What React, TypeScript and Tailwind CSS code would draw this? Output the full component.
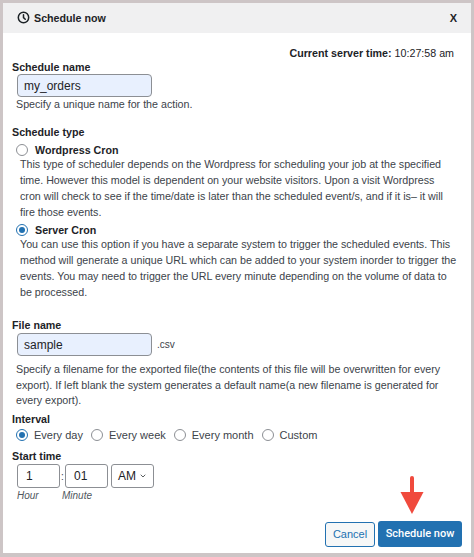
import { ChevronDown } from 'lucide-react'

function Radio({ checked }: { checked?: boolean }) {
  return (
    <span
      className={
        'inline-flex h-[12px] w-[12px] shrink-0 items-center justify-center rounded-full border bg-white ' +
        (checked ? 'border-[#2271b1]' : 'border-[#8c8f94]')
      }
    >
      {checked && <span className="h-[6px] w-[6px] rounded-full bg-[#2271b1]" />}
    </span>
  )
}

function ClockIcon() {
  return (
    <svg width="13" height="13" viewBox="0 0 24 24" fill="none" stroke="#1d2327" strokeWidth="2.8" strokeLinecap="round">
      <circle cx="12" cy="12" r="9.6" />
      <path d="M12 6.8v5.4l3.2 3" />
    </svg>
  )
}

const intervals = ['Every day', 'Every week', 'Every month', 'Custom']

export default function App() {
  return (
    <div
      className="h-[557px] w-[474px] bg-[#cdc5c6] px-[3px] pb-[4px] pt-[3px] text-[10.7px] text-[#3c434a]"
      style={{ fontFamily: '"Liberation Sans", Arial, sans-serif' }}
    >
      <div className="flex h-full flex-col bg-white">
        {/* header */}
        <div className="flex h-[30px] shrink-0 items-center justify-between bg-[#f0f0f1] pl-[14px] pr-[14px]">
          <div className="flex items-center gap-[4px]">
            <ClockIcon />
            <span className="text-[10.7px] font-bold text-[#1d2327]">Schedule now</span>
          </div>
          <span className="text-[11px] font-bold text-[#1d2327]">X</span>
        </div>

        <div className="flex flex-1 flex-col px-[9px]">
          <div className="mr-[8px] mt-[13px] text-right leading-[14px] text-[#1d2327]">
            <span className="font-bold">Current server time:</span> 10:27:58 am
          </div>

          <div className="font-bold leading-[14px] text-[#1d2327]">Schedule name</div>
          <div className="ml-[5px] flex h-[23px] w-[135px] items-center rounded-[4px] border border-[#8c8f94] bg-[#e8f0fe] px-[6px] text-[12px] text-[#1d2327]">
            my_orders
          </div>
          <div className="ml-[4px] leading-[14px]">Specify a unique name for the action.</div>

          <div className="mt-[14px] font-bold leading-[14px] text-[#1d2327]">Schedule type</div>
          <div className="ml-[4px] mt-[4px] flex h-[14px] items-center gap-[7px]">
            <Radio />
            <span className="font-bold text-[#1d2327]">Wordpress Cron</span>
          </div>
          <p className="ml-[8px] mt-[-1px] leading-[16px]">
            This type of scheduler depends on the Wordpress for scheduling your job at the specified
            <br />
            time. However this model is dependent on your website visitors. Upon a visit Wordpress
            <br />
            cron will check to see if the time/date is later than the scheduled event/s, and if it is– it will
            <br />
            fire those events.
          </p>
          <div className="ml-[4px] mt-[3px] flex h-[14px] items-center gap-[7px]">
            <Radio checked />
            <span className="font-bold text-[#1d2327]">Server Cron</span>
          </div>
          <p className="ml-[8px] mt-[-1px] leading-[16px]">
            You can use this option if you have a separate system to trigger the scheduled events. This
            <br />
            method will generate a unique URL which can be added to your system inorder to trigger the
            <br />
            events. You may need to trigger the URL every minute depending on the volume of data to
            <br />
            be processed.
          </p>

          <div className="mt-[18px] font-bold leading-[14px] text-[#1d2327]">File name</div>
          <div className="ml-[5px] mt-[1px] flex items-center gap-[5px]">
            <div className="flex h-[23px] w-[135px] items-center rounded-[4px] border border-[#8c8f94] bg-[#e8f0fe] px-[6px] text-[12px] text-[#1d2327]">
              sample
            </div>
            <span className="text-[10px]">.csv</span>
          </div>
          <p className="ml-[4px] mt-[6px] leading-[15.7px]">
            Specify a filename for the exported file(the contents of this file will be overwritten for every
            <br />
            export). If left blank the system generates a default name(a new filename is generated for
            <br />
            every export).
          </p>

          <div className="mt-[3px] font-bold leading-[14px] text-[#1d2327]">Interval</div>
          <div className="ml-[4px] mt-[1px] flex h-[16px] items-center">
            {intervals.map((label, i) => (
              <label key={label} className="mr-[8px] flex items-center gap-[6px]">
                <Radio checked={i === 0} />
                <span className="text-[11px]">{label}</span>
              </label>
            ))}
          </div>

          <div className="mt-[6px] font-bold leading-[14px] text-[#1d2327]">Start time</div>
          <div className="ml-[5px] mt-[1px] flex items-center">
            <div className="flex h-[24px] w-[43px] items-center rounded-[3px] border border-[#8c8f94] px-[8px] text-[12px] text-[#1d2327]">
              1
            </div>
            <span className="w-[5px] text-center text-[10px]">:</span>
            <div className="flex h-[24px] w-[43px] items-center rounded-[3px] border border-[#8c8f94] px-[8px] text-[12px] text-[#1d2327]">
              01
            </div>
            <div className="ml-[3px] flex h-[24px] w-[43px] items-center gap-[3px] rounded-[3px] border border-[#8c8f94] px-[6px] text-[12px] text-[#1d2327]">
              AM
              <ChevronDown size={10} strokeWidth={2.2} />
            </div>
          </div>
          <div className="ml-[5px] mt-[1px] flex text-[10px] italic leading-[14px] text-[#50575e]">
            <span className="w-[45px]">Hour</span>
            <span>Minute</span>
          </div>

          <div className="mb-[6px] mt-auto flex items-end justify-end gap-[3px]">
            <button className="h-[25px] w-[50px] rounded-[3px] border border-[#2271b1] bg-[#f6f7f7] text-[11px] text-[#2271b1]">
              Cancel
            </button>
            <div className="relative">
              <svg className="absolute bottom-[32px] left-[22px]" width="24" height="40" viewBox="0 0 24 40">
                <path d="M12 3v18" stroke="#f04a3d" strokeWidth="4" strokeLinecap="round" />
                <path d="M0.5 17h23L12 39z" fill="#f04a3d" />
              </svg>
              <button
                className="h-[26px] w-[84px] rounded-[3px] bg-[#2271b1] text-[11px] font-medium text-white"
                style={{ fontFamily: 'Roboto, "Liberation Sans", sans-serif' }}
              >
                Schedule now
              </button>
            </div>
          </div>
        </div>
      </div>
    </div>
  )
}
